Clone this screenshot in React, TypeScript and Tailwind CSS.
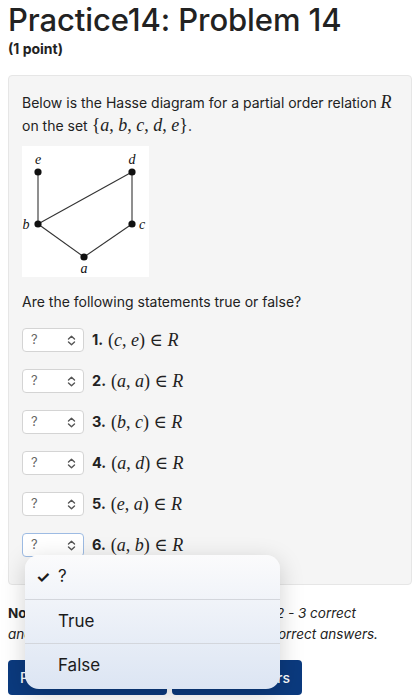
import React from "react";

const sans = { fontFamily: "Inter, 'Noto Sans', sans-serif" };
const serif = { fontFamily: "'Liberation Serif', 'DejaVu Serif', serif" };

function V({ children }: { children: React.ReactNode }) {
  return <span className="italic">{children}</span>;
}

function Pair({ x, y }: { x: string; y: string }) {
  return (
    <span style={serif} className="text-[18px]">
      (<V>{x}</V>, <V>{y}</V>) ∈ <V>R</V>
    </span>
  );
}

function UpDown() {
  return (
    <svg width="9" height="11" viewBox="0 0 9 11" fill="none" stroke="#555" strokeWidth="1.4" strokeLinecap="round" strokeLinejoin="round">
      <path d="M1.5 4 L4.5 1.2 L7.5 4" />
      <path d="M1.5 7 L4.5 9.8 L7.5 7" />
    </svg>
  );
}

function Hasse() {
  const node = (cx: number, cy: number) => <circle cx={cx} cy={cy} r="3.6" fill="#111" />;
  return (
    <div className="w-[127px] h-[131px] bg-white">
      <svg width="127" height="131" viewBox="0 0 127 131">
        <g stroke="#333" strokeWidth="1.1">
          <line x1="16" y1="26" x2="16" y2="78" />
          <line x1="16" y1="78" x2="110" y2="26" />
          <line x1="110" y1="26" x2="110" y2="78" />
          <line x1="16" y1="78" x2="62" y2="111" />
          <line x1="110" y1="78" x2="62" y2="111" />
        </g>
        {node(16, 26)}
        {node(110, 26)}
        {node(16, 78)}
        {node(110, 78)}
        {node(62, 111)}
        <g style={serif} fontStyle="italic" fontSize="14" fill="#111">
          <text x="16" y="18" textAnchor="middle">e</text>
          <text x="110" y="18" textAnchor="middle">d</text>
          <text x="4" y="83" textAnchor="middle">b</text>
          <text x="120" y="83" textAnchor="middle">c</text>
          <text x="62" y="127" textAnchor="middle">a</text>
        </g>
      </svg>
    </div>
  );
}

const rows: [string, string][] = [
  ["c", "e"],
  ["a", "a"],
  ["b", "c"],
  ["a", "d"],
  ["e", "a"],
  ["a", "b"],
];

export default function App() {
  return (
    <div style={sans} className="relative w-[420px] h-[700px] overflow-hidden bg-white text-[#222]">
      <div className="px-2">
        <h1 className="text-[31px] font-medium leading-[36px] pt-[2px] tracking-[-0.1px] text-[#222]">Practice14: Problem 14</h1>
        <p className="text-[14px] font-bold leading-[20px] mt-[1px]">(1 point)</p>

        <div className="mt-[16px] h-[510px] bg-[#f5f5f5] border border-[#e6e6e6] rounded-[4px] pl-[13px] pt-[15px]">
          <p className="text-[14px] leading-[22px] text-[#222]">
            Below is the Hasse diagram for a partial order relation{" "}
            <span style={serif} className="italic text-[18px]">R</span>
            <br />
            on the set{" "}
            <span style={serif} className="text-[18px]">
              {"{"}
              <V>a</V>, <V>b</V>, <V>c</V>, <V>d</V>, <V>e</V>
              {"}"}
            </span>
            .
          </p>
          <div className="mt-[9px]">
            <Hasse />
          </div>
          <p className="text-[14px] leading-[22px] mt-[14px]">Are the following statements true or false?</p>
          <div className="mt-[15px] flex flex-col gap-[17px]">
            {rows.map(([x, y], i) => (
              <div key={i} className="flex items-center h-[24px]">
                <div
                  className={`w-[62px] h-[24px] bg-white rounded-[4px] border flex items-center justify-between pl-[8px] pr-[7px] ${
                    i === 5 ? "border-[#9dbbe3]" : "border-[#d4d4d4]"
                  }`}
                >
                  <span className="text-[13px] text-[#666]">?</span>
                  <UpDown />
                </div>
                <span className="ml-[8px] text-[14.5px] font-bold">{i + 1}.</span>
                <span className="ml-[5px]">
                  <Pair x={x} y={y} />
                </span>
              </div>
            ))}
          </div>
        </div>

        <div className="mt-[18px] text-[13.5px] leading-[21px] text-[#222]">
          <div className="flex">
            <span className="font-bold">Note:</span>
            <span className="ml-auto mr-[56px] italic">2 - 3 correct</span>
          </div>
          <div className="flex">
            <span className="italic">and</span>
            <span className="ml-auto mr-[34px] italic">4 - 5 correct answers.</span>
          </div>
        </div>

        <div className="mt-[15px] flex gap-[5px]">
          <div className="w-[159px] h-[35px] bg-[#0b3a7e] rounded-[4px] text-white text-[14px] font-medium flex items-center pl-[12px]">
            Preview
          </div>
          <div className="w-[130px] h-[35px] bg-[#0b3a7e] rounded-[4px] text-white text-[14px] font-medium flex items-center justify-end pr-[12px]">
            Submit Answers
          </div>
        </div>
      </div>

      {/* native select menu */}
      <div className="absolute left-[25px] top-[555px] w-[255px] h-[134px] rounded-[14px] overflow-hidden bg-gradient-to-b from-[#fbfbfc] to-[#dce5f3] shadow-[0_6px_24px_rgba(0,0,0,0.18)] text-[17px] text-[#1b1b1b]">
        <div className="h-[45px] flex items-center pl-[11px] border-b border-[#d3d6dc]">
          <span className="w-[22px] text-[16px] font-bold">✓</span>
          <span>?</span>
        </div>
        <div className="h-[44px] flex items-center pl-[33px] border-b border-[#d3d6dc]">True</div>
        <div className="h-[44px] flex items-center pl-[33px]">False</div>
      </div>
    </div>
  );
}
